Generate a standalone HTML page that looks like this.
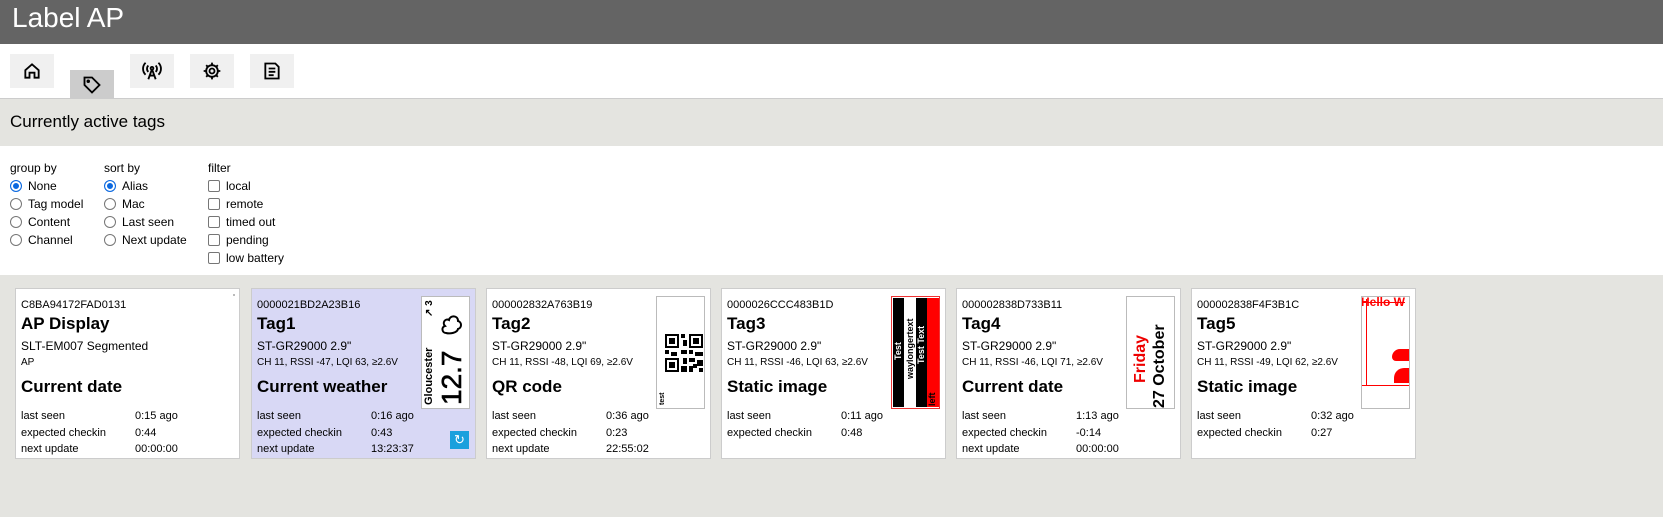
<!DOCTYPE html>
<html><head><meta charset="utf-8"><style>
*{box-sizing:border-box;margin:0;padding:0}
body{width:1663px;height:517px;overflow:hidden;background:#e4e4e0;font-family:"Liberation Sans",Arial,sans-serif;color:#000;position:relative}
.hdr{position:absolute;left:0;top:0;width:1663px;height:44px;background:#646464;color:#fff;font-size:28px;padding:0 0 0 12px;line-height:36px}
.nav{position:absolute;left:0;top:44px;width:1663px;height:55px;background:#fff;border-bottom:1px solid #ccc}
.btn{position:absolute;top:10px;width:44px;height:34px;background:#f0f0f0;display:flex;align-items:center;justify-content:center}
.btn.act{top:26px;height:29px;background:#ccc}
.sec{position:absolute;left:0;top:100px;width:1663px;height:46px;font-size:17px;padding:12px 0 0 10px}
.opts{position:absolute;left:0;top:146px;width:1663px;height:129px;background:#fff;font-size:12px}
.col{position:absolute;top:13px}
.col div{height:18px;line-height:18px;display:flex;align-items:center}
.r{width:12px;height:12px;border:1px solid #767676;border-radius:50%;margin-right:6px;background:#fff}
.r.on{border:1px solid #0a68e0;box-shadow:inset 0 0 0 2px #fff;background:#0a68e0}
.c{width:12px;height:12px;border:1px solid #767676;border-radius:2px;margin-right:6px}
.card{position:absolute;top:288px;width:225px;height:171px;background:#fff;border:1px solid #ccc;font-size:11px}
.card .mac{position:absolute;left:5px;top:10px;font-size:11px}
.card .nm{position:absolute;left:5px;top:25px;font-size:17px;font-weight:bold}
.card .md{position:absolute;left:5px;top:50px;font-size:12px}
.card .ch{position:absolute;left:5px;top:68px;font-size:10px}
.card .ct{position:absolute;left:5px;top:88px;font-size:17px;font-weight:bold}
.card .st{position:absolute;left:5px;top:119px;font-size:11px;line-height:16.5px}
.card .st span{display:inline-block;width:114px}
.img{position:absolute;left:169px;top:7px;width:49px;height:113px;border:1px solid #bbb;background:#fff;overflow:hidden}
.vt{position:absolute;transform:rotate(-90deg);transform-origin:0 0;white-space:nowrap;font-weight:bold}
</style></head><body>
<div class="hdr">Label AP</div>
<div class="nav">
<div class="btn" style="left:10px"><svg width="20" height="20" viewBox="0 0 24 24" fill="none" stroke="#000" stroke-width="2.2"><path d="M4 11 12 4l8 7v9h-5v-6h-6v6H4z"/></svg></div>
<div class="btn act" style="left:70px"><svg width="20" height="20" viewBox="0 0 24 24" fill="none" stroke="#000" stroke-width="2.2"><path d="M3 3h9l9 9-9 9-9-9z"/><circle cx="7.5" cy="7.5" r="1" fill="#000"/></svg></div>
<div class="btn" style="left:130px"><svg width="22" height="22" viewBox="0 0 24 24" fill="none" stroke="#000" stroke-width="2"><path d="M12 10 8 21M12 10l4 11M9 17h6"/><circle cx="12" cy="9" r="1.5"/><path d="M8 6a5 5 0 0 0 0 7M16 6a5 5 0 0 1 0 7M5 3a9 9 0 0 0 0 13M19 3a9 9 0 0 1 0 13"/></svg></div>
<div class="btn" style="left:190px"><svg width="20" height="20" viewBox="0 0 24 24" fill="none" stroke="#000" stroke-width="2.2"><circle cx="12" cy="12" r="3"/><path d="M12 2v3M12 19v3M2 12h3M19 12h3M5 5l2 2M17 17l2 2M5 19l2-2M17 7l2-2"/><circle cx="12" cy="12" r="7"/></svg></div>
<div class="btn" style="left:250px"><svg width="20" height="20" viewBox="0 0 24 24" fill="none" stroke="#000" stroke-width="2.2"><path d="M4 3h12l4 4v14H4z"/><path d="M8 9h8M8 13h8M8 17h6"/></svg></div>
</div>
<div class="sec">Currently active tags</div>
<div class="opts">
<div class="col" style="left:10px"><div>group by</div><div><i class="r on"></i>None</div><div><i class="r"></i>Tag model</div><div><i class="r"></i>Content</div><div><i class="r"></i>Channel</div></div>
<div class="col" style="left:104px"><div>sort by</div><div><i class="r on"></i>Alias</div><div><i class="r"></i>Mac</div><div><i class="r"></i>Last seen</div><div><i class="r"></i>Next update</div></div>
<div class="col" style="left:208px"><div>filter</div><div><i class="c"></i>local</div><div><i class="c"></i>remote</div><div><i class="c"></i>timed out</div><div><i class="c"></i>pending</div><div><i class="c"></i>low battery</div></div>
</div>

<div class="card" style="left:15px"><div class="mac">C8BA94172FAD0131</div><div class="nm">AP Display</div><div class="md">SLT-EM007 Segmented</div><div class="ch">AP</div><div class="ct">Current date</div><div class="st"><span>last seen</span>0:15 ago<br><span>expected checkin</span>0:44<br><span>next update</span>00:00:00</div><div style="position:absolute;left:217px;top:5px;width:2px;height:2px;background:#bbb"></div></div>

<div class="card" style="left:251px;background:#d8d8f5"><div class="mac">0000021BD2A23B16</div><div class="nm">Tag1</div><div class="md">ST-GR29000 2.9"</div><div class="ch">CH 11, RSSI -47, LQI 63, ≥2.6V</div><div class="ct">Current weather</div><div class="st"><span>last seen</span>0:16 ago<br><span>expected checkin</span>0:43<br><span>next update</span>13:23:37</div>
<div class="img"><div class="vt" style="left:1px;top:108px;font-size:11px">Gloucester</div><div class="vt" style="left:14px;top:108px;font-size:28px;font-weight:normal;-webkit-text-stroke:.6px #000">12.7</div><div class="vt" style="left:2px;top:20px;font-size:10px">↗ 3</div><svg style="position:absolute;left:18px;top:4px" width="22" height="36" viewBox="0 0 22 36" fill="none" stroke="#000" stroke-width="2"><path d="M6 32c-4 0-5-6-1-7-3-3 0-8 4-6 1-5 9-5 9 1 4 1 4 7 0 8-1 4-8 5-12 4z"/></svg></div>
<div style="position:absolute;left:198px;top:142px;width:19px;height:18px;background:#1aa0dd;color:#fff;font-size:13px;text-align:center;line-height:18px">↻</div></div>

<div class="card" style="left:486px"><div class="mac">000002832A763B19</div><div class="nm">Tag2</div><div class="md">ST-GR29000 2.9"</div><div class="ch">CH 11, RSSI -48, LQI 69, ≥2.6V</div><div class="ct">QR code</div><div class="st"><span>last seen</span>0:36 ago<br><span>expected checkin</span>0:23<br><span>next update</span>22:55:02</div>
<div class="img"><svg style="position:absolute;left:8px;top:37px" width="38" height="38" viewBox="0 0 19 19"><rect x="0" y="0" width="7" height="7"/><rect x="1" y="1" width="5" height="5" fill="#fff"/><rect x="2" y="2" width="3" height="3"/><rect x="12" y="0" width="7" height="7"/><rect x="13" y="1" width="5" height="5" fill="#fff"/><rect x="14" y="2" width="3" height="3"/><rect x="0" y="12" width="7" height="7"/><rect x="1" y="13" width="5" height="5" fill="#fff"/><rect x="2" y="14" width="3" height="3"/><path d="M8 0h2v2H8zM9 3h2v3H9zM8 8h3v2H8zM12 8h2v2h-2zM15 9h4v2h-4zM0 8h2v2H0zM3 9h3v2H3zM9 12h2v3H9zM12 12h3v2h-3zM16 13h3v3h-3zM8 16h3v3H8zM12 16h2v3h-2zM14 15h2v2h-2zM17 17h2v2h-2z"/></svg><div class="vt" style="left:2px;top:108px;font-size:7px">test</div></div></div>

<div class="card" style="left:721px"><div class="mac">0000026CCC483B1D</div><div class="nm">Tag3</div><div class="md">ST-GR29000 2.9"</div><div class="ch">CH 11, RSSI -46, LQI 63, ≥2.6V</div><div class="ct">Static image</div><div class="st"><span>last seen</span>0:11 ago<br><span>expected checkin</span>0:48</div>
<div class="img" style="border:1px solid #e33"><div style="position:absolute;left:1px;top:1px;width:11px;height:109px;background:#000"></div><div style="position:absolute;left:12px;top:1px;width:12px;height:109px;background:#fff"></div><div style="position:absolute;left:24px;top:1px;width:11px;height:109px;background:#000"></div><div style="position:absolute;left:35px;top:1px;width:12px;height:109px;background:#f00"></div>
<div class="vt" style="left:1px;top:63px;font-size:9px;color:#fff">Test</div><div class="vt" style="left:13px;top:82px;font-size:9px">waylongertext</div><div class="vt" style="left:24px;top:67px;font-size:9px;color:#fff">Test Text</div><div class="vt" style="left:35px;top:109px;font-size:9px;color:#000">left</div></div></div>

<div class="card" style="left:956px"><div class="mac">000002838D733B11</div><div class="nm">Tag4</div><div class="md">ST-GR29000 2.9"</div><div class="ch">CH 11, RSSI -46, LQI 71, ≥2.6V</div><div class="ct">Current date</div><div class="st"><span>last seen</span>1:13 ago<br><span>expected checkin</span>-0:14<br><span>next update</span>00:00:00</div>
<div class="img"><div class="vt" style="left:5px;top:86px;font-size:16px;color:#e00">Friday</div><div class="vt" style="left:24px;top:111px;font-size:16px">27 October</div></div></div>

<div class="card" style="left:1191px"><div class="mac">000002838F4F3B1C</div><div class="nm">Tag5</div><div class="md">ST-GR29000 2.9"</div><div class="ch">CH 11, RSSI -49, LQI 62, ≥2.6V</div><div class="ct">Static image</div><div class="st"><span>last seen</span>0:32 ago<br><span>expected checkin</span>0:27</div>
<div class="img"><div style="position:absolute;left:-1px;top:-2px;font-size:12px;font-weight:bold;color:#f00;white-space:nowrap;text-decoration:line-through">Hello W</div><div style="position:absolute;left:4px;top:2px;width:1px;height:86px;background:#f00"></div><div style="position:absolute;left:0;top:88px;width:49px;height:1px;background:#f00"></div><div style="position:absolute;left:30px;top:52px;width:18px;height:12px;background:#f00;border-radius:8px 0 0 4px"></div><div style="position:absolute;left:32px;top:71px;width:16px;height:15px;background:#f00;border-radius:10px 0 0 0"></div></div></div>
</body></html>
